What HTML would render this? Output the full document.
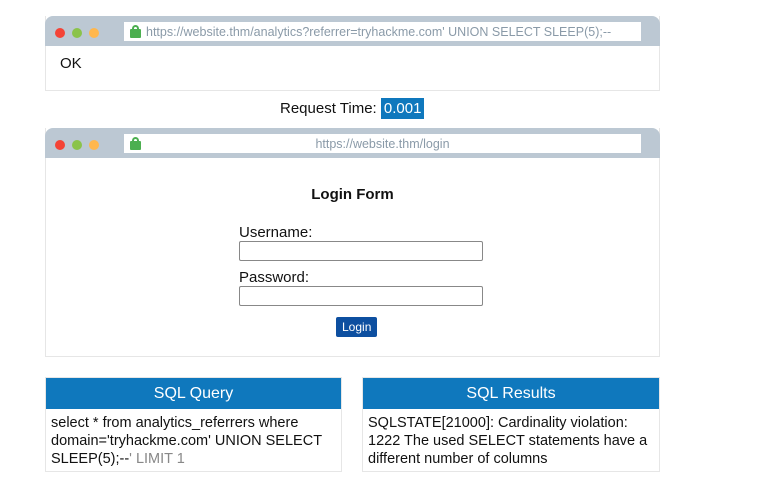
<!DOCTYPE html>
<html><head><style>
*{box-sizing:border-box;margin:0;padding:0}
body{width:768px;height:501px;background:#fff;font-family:"Liberation Sans",sans-serif;color:#111;position:relative;overflow:hidden}
.br{position:absolute;left:45px;width:615px;border:1px solid #e6e6e6;border-top:none}
.bar{height:30px;background:#bcc8d3;border-radius:8px 8px 0 0;position:relative;margin:0 -1px}
.dot{position:absolute;top:12px;width:10px;height:10px;border-radius:50%}
.url{position:absolute;left:79px;top:6px;width:517px;height:19px;background:#fff;font-size:12.5px;color:#8a9aa8;line-height:20px;padding-left:22px;white-space:nowrap;overflow:hidden}
.lock{position:absolute;left:6px;top:7px;width:11px;height:9px;background:#4caf50;border-radius:1px}
.lock:before{content:"";position:absolute;left:2px;top:-4px;width:7px;height:6px;border:2px solid #4caf50;border-bottom:none;border-radius:4px 4px 0 0;box-sizing:border-box}
input{display:block;width:244px;height:20px;border:1px solid #888;border-radius:2px}
.tb{position:absolute;top:377px;height:95px;border:1px solid #e6e6e6}
.th{background:#0f78bd;color:#fff;text-align:center;font-size:16px;height:31px;line-height:31px}
.td{font-size:14.5px;line-height:18px;padding:5px 5px}
</style></head><body>
<div class="br" style="top:16px;height:75px">
<div class="bar"><span class="dot" style="left:10px;background:#f44336"></span><span class="dot" style="left:27px;background:#8bc34a"></span><span class="dot" style="left:44px;background:#ffb74d"></span>
<div class="url"><span class="lock"></span>https://website.thm/analytics?referrer=tryhackme.com' UNION SELECT SLEEP(5);--</div></div>
<div style="font-size:15px;padding:9px 14px">OK</div>
</div>
<div style="position:absolute;left:280px;top:98px;font-size:15px;line-height:22px">Request Time: <span style="background:#0f78bd;color:#fff;padding:2px 3px">0.001</span></div>
<div class="br" style="top:128px;height:229px">
<div class="bar"><span class="dot" style="left:10px;background:#f44336"></span><span class="dot" style="left:27px;background:#8bc34a"></span><span class="dot" style="left:44px;background:#ffb74d"></span>
<div class="url"><span class="lock"></span><span style="position:absolute;left:0;right:0;text-align:center">https://website.thm/login</span></div></div>
<div style="position:absolute;top:58px;left:0;right:0;text-align:center;font-weight:bold;font-size:15px">Login Form</div>
<div style="position:absolute;left:193px;top:96px;font-size:15px">Username:<input style="margin-top:0"></div>
<div style="position:absolute;left:193px;top:141px;font-size:15px">Password:<input style="margin-top:0"></div>
<div style="position:absolute;left:290px;top:189px;background:#0d4fa0;color:#fff;font-size:12px;padding:3px 6px;border-radius:2px">Login</div>
</div>
<div class="tb" style="left:45px;width:297px"><div class="th">SQL Query</div><div class="td">select * from analytics_referrers where domain='tryhackme.com' UNION SELECT SLEEP(5);--<span style="color:#888">' LIMIT 1</span></div></div>
<div class="tb" style="left:362px;width:298px"><div class="th">SQL Results</div><div class="td">SQLSTATE[21000]: Cardinality violation: 1222 The used SELECT statements have a different number of columns</div></div>
</body></html>
